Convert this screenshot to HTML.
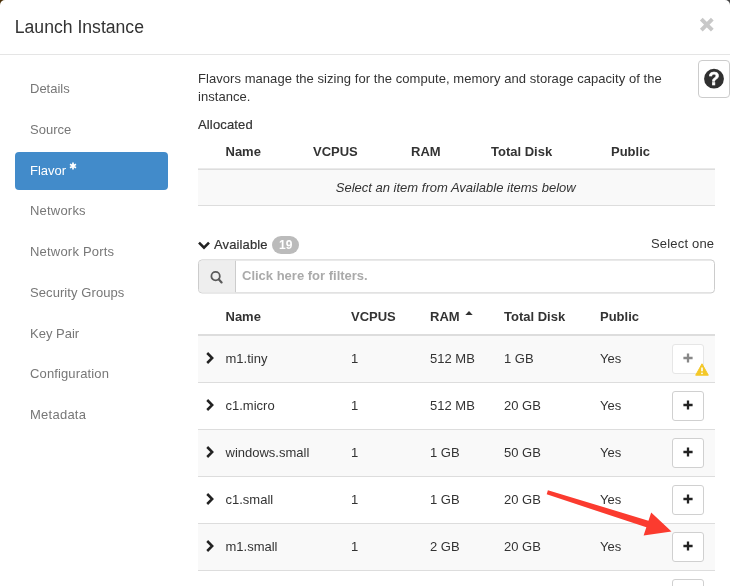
<!DOCTYPE html>
<html><head><meta charset="utf-8">
<style>
*{box-sizing:border-box}
html,body{margin:0;padding:0}
body{width:730px;height:586px;overflow:hidden;background:#fff;font-family:"Liberation Sans",sans-serif;font-size:13px;line-height:18.57px;color:#333;position:relative}
.corner{position:absolute;top:0;width:6px;height:6px}
.corner.l{left:0;background:#4a3008}.corner.r{right:0;background:#444}
.modal{will-change:transform;position:absolute;left:0;top:0;width:730px;height:700px;background:#fff;border-radius:5px}
.hdr{position:absolute;left:0;top:0;width:730px;height:55px;border-bottom:1px solid #e5e5e5}
.title{position:absolute;left:14.8px;top:14px;font-size:17.6px;line-height:26px;color:#333}
.close{position:absolute;left:699px;top:13px;width:16px;height:20px}
.nav div{position:absolute;left:15px;width:153px;height:38px;line-height:38px;padding:0 15px;color:#777;border-radius:4px}
.nav div.act{background:#428bca;color:#fff}
.nav .ast{position:absolute;left:54px;top:10px}
.help{position:absolute;left:698px;top:60px;width:32px;height:38px;border:1px solid #ccc;border-radius:4px;background:#fff}
.abs{position:absolute}
table{border-collapse:collapse;position:absolute;left:198px;width:517px;table-layout:fixed}
th{font-weight:bold;text-align:left;padding:0;vertical-align:middle}
td{padding:0;vertical-align:middle}
.btn{position:absolute;left:672px;width:32px;height:31px;border:1px solid #ccc;border-radius:4px;background:#fff}

.th{font-weight:bold}
.med{-webkit-text-stroke:0.2px #333;letter-spacing:0.15px}
.badge{left:272px;top:236px;height:18px;min-width:10px;padding:3px 7px;font-size:12px;line-height:12px;font-weight:bold;color:#fff;background:#bbb;border-radius:10px}
.filter{transform:translateY(0.45px);left:198px;top:259px;width:517px;height:34px;border:1px solid #ccc;border-radius:4px;background:#fff}
.filter .addon{position:absolute;left:0;top:0;width:37px;height:32px;background:#eee;border-right:1px solid #ccc;border-radius:3px 0 0 3px}
.filter .addon svg{position:absolute;left:11px;top:10px}
.filter .ph{position:absolute;left:43px;top:7px;color:#aaa;font-weight:bold}
.row{left:198px;width:517px;height:47px;border-bottom:1px solid #ddd}
.row span{position:absolute;top:14px}
.row .chev{position:absolute;left:6.7px;top:14.8px}
.row .btn{position:absolute;left:474px;top:8px;width:32px;height:30px;border:1px solid #d0d0d0;border-radius:3px;background:#fff}
.row .btn.dis{border-color:#e6e6e6}
.row .btn svg{position:absolute;left:9px;top:7.4px}
.row .warn{position:absolute;left:497px;top:27px}
</style></head><body>
<div class="corner l"></div><div class="corner r"></div>
<div class="modal">
<div class="hdr"><div class="title">Launch Instance</div>
<svg class="close" viewBox="0 0 16 20"><path d="M2.3 6.1 L13.3 17.2 M13.3 6.1 L2.3 17.2" stroke="#c8c8c8" stroke-width="3.9" fill="none"/></svg>
</div>
<div class="nav">
<div style="top:70px"><span>Details</span></div><div style="top:111px"><span>Source</span></div><div class="act" style="top:151.8px">Flavor<svg class="ast" width="8" height="8" viewBox="0 0 8 8"><path d="M4 0.5 V7.5 M1 2.25 L7 5.75 M7 2.25 L1 5.75" stroke="#fff" stroke-width="1.7"/></svg></div><div style="top:192px"><span style="letter-spacing:0.2px">Networks</span></div><div style="top:233px"><span style="letter-spacing:0.2px">Network Ports</span></div><div style="top:274px"><span style="letter-spacing:0.08px">Security Groups</span></div><div style="top:315px"><span>Key Pair</span></div><div style="top:355px"><span style="letter-spacing:0.13px">Configuration</span></div><div style="top:396px"><span style="letter-spacing:0.25px">Metadata</span></div>
</div>
<div class="abs" style="left:198px;top:70.3px;width:500px;letter-spacing:0.055px;line-height:18px">Flavors manage the sizing for the compute, memory and storage capacity of the instance.</div>
<div class="help"><svg width="22" height="22" viewBox="0 0 22 22" style="position:absolute;left:4px;top:7px"><circle cx="11" cy="10.7" r="9.9" fill="#303030"/><text x="11.1" y="17.2" text-anchor="middle" font-family="Liberation Sans, sans-serif" font-weight="bold" font-size="18" fill="#fff" stroke="#fff" stroke-width="0.5">?</text></svg></div>
<div class="abs med" style="left:198px;top:116px">Allocated</div>
<div class="abs th" style="left:225.5px;top:143px">Name</div>
<div class="abs th" style="left:313px;top:143px">VCPUS</div>
<div class="abs th" style="left:411px;top:143px">RAM</div>
<div class="abs th" style="left:491px;top:143px">Total Disk</div>
<div class="abs th" style="left:611px;top:143px">Public</div>
<div class="abs" style="left:198px;top:168px;width:517px;height:2px;background:#ddd;transform:translateY(0.4px)"></div>
<div class="abs" style="left:198px;top:170px;width:517px;height:36px;background:#f9f9f9;border-bottom:1px solid #ddd;text-align:center;line-height:35px;font-style:italic;padding-right:1.5px">Select an item from Available items below</div>
<svg class="abs" style="left:197px;top:240px" width="14" height="11" viewBox="0 0 14 11"><path d="M2 2.6 L7 7.6 L12 2.6" stroke="#222" stroke-width="2.6" fill="none"/></svg>
<div class="abs" style="left:214px;top:236px;letter-spacing:0.12px;-webkit-text-stroke:0.2px #333">Available</div>
<div class="abs badge">19</div>
<div class="abs" style="left:651px;top:235px;letter-spacing:0.18px">Select one</div>
<div class="abs filter"><div class="addon"><svg width="14" height="14" viewBox="0 0 14 14"><circle cx="5.6" cy="5.7" r="4.2" stroke="#5a5a5a" stroke-width="1.8" fill="none"/><path d="M8.7 8.8 L11.6 12" stroke="#5a5a5a" stroke-width="2.2" stroke-linecap="round"/></svg></div><div class="ph">Click here for filters.</div></div>
<div class="abs th" style="left:225.5px;top:308px">Name</div>
<div class="abs th" style="left:351px;top:308px">VCPUS</div>
<div class="abs th" style="left:430px;top:308px">RAM</div>
<svg class="abs" style="left:465px;top:310.3px" width="8" height="6" viewBox="0 0 8 6"><path d="M0.3 5 L4 1 L7.7 5 Z" fill="#333"/></svg>
<div class="abs th" style="left:504px;top:308px">Total Disk</div>
<div class="abs th" style="left:600px;top:308px">Public</div>
<div class="abs" style="left:198px;top:334px;width:517px;height:2px;background:#ddd"></div>
<div class="abs row" style="top:336px;background:#f9f9f9"><svg class="chev" width="10" height="14" viewBox="0 0 10 14"><path d="M2.2 2 L7.2 7 L2.2 12" stroke="#222" stroke-width="2.5" fill="none"/></svg><span style="left:27.5px">m1.tiny</span><span style="left:153px">1</span><span style="left:232px">512 MB</span><span style="left:306px">1 GB</span><span style="left:402px">Yes</span><div class="btn dis"><svg width="12" height="12" viewBox="0 0 12 12"><path d="M6 1.4 V10.6 M1.4 6 H10.6" stroke="#888" stroke-width="2.3"/></svg></div><svg class="warn" width="14" height="13" viewBox="0 0 14 13"><path d="M7 0.8 L13.3 12.2 H0.7 Z" fill="#f4c828" stroke="#f4c828" stroke-width="1" stroke-linejoin="round"/><path d="M7 4.5 V8.3" stroke="#fff" stroke-width="1.6"/><circle cx="7" cy="10.3" r="0.9" fill="#fff"/></svg></div>
<div class="abs row" style="top:383px;background:#fff"><svg class="chev" width="10" height="14" viewBox="0 0 10 14"><path d="M2.2 2 L7.2 7 L2.2 12" stroke="#222" stroke-width="2.5" fill="none"/></svg><span style="left:27.5px">c1.micro</span><span style="left:153px">1</span><span style="left:232px">512 MB</span><span style="left:306px">20 GB</span><span style="left:402px">Yes</span><div class="btn"><svg width="12" height="12" viewBox="0 0 12 12"><path d="M6 1.4 V10.6 M1.4 6 H10.6" stroke="#222" stroke-width="2.3"/></svg></div></div>
<div class="abs row" style="top:430px;background:#f9f9f9"><svg class="chev" width="10" height="14" viewBox="0 0 10 14"><path d="M2.2 2 L7.2 7 L2.2 12" stroke="#222" stroke-width="2.5" fill="none"/></svg><span style="left:27.5px">windows.small</span><span style="left:153px">1</span><span style="left:232px">1 GB</span><span style="left:306px">50 GB</span><span style="left:402px">Yes</span><div class="btn"><svg width="12" height="12" viewBox="0 0 12 12"><path d="M6 1.4 V10.6 M1.4 6 H10.6" stroke="#222" stroke-width="2.3"/></svg></div></div>
<div class="abs row" style="top:477px;background:#fff"><svg class="chev" width="10" height="14" viewBox="0 0 10 14"><path d="M2.2 2 L7.2 7 L2.2 12" stroke="#222" stroke-width="2.5" fill="none"/></svg><span style="left:27.5px">c1.small</span><span style="left:153px">1</span><span style="left:232px">1 GB</span><span style="left:306px">20 GB</span><span style="left:402px">Yes</span><div class="btn"><svg width="12" height="12" viewBox="0 0 12 12"><path d="M6 1.4 V10.6 M1.4 6 H10.6" stroke="#222" stroke-width="2.3"/></svg></div></div>
<div class="abs row" style="top:524px;background:#f9f9f9"><svg class="chev" width="10" height="14" viewBox="0 0 10 14"><path d="M2.2 2 L7.2 7 L2.2 12" stroke="#222" stroke-width="2.5" fill="none"/></svg><span style="left:27.5px">m1.small</span><span style="left:153px">1</span><span style="left:232px">2 GB</span><span style="left:306px">20 GB</span><span style="left:402px">Yes</span><div class="btn"><svg width="12" height="12" viewBox="0 0 12 12"><path d="M6 1.4 V10.6 M1.4 6 H10.6" stroke="#222" stroke-width="2.3"/></svg></div></div>
<div class="abs row" style="top:571px;background:#fff"><svg class="chev" width="10" height="14" viewBox="0 0 10 14"><path d="M2.2 2 L7.2 7 L2.2 12" stroke="#222" stroke-width="2.5" fill="none"/></svg><span style="left:27.5px">m1.medium</span><span style="left:153px">2</span><span style="left:232px">4 GB</span><span style="left:306px">40 GB</span><span style="left:402px">Yes</span><div class="btn"><svg width="12" height="12" viewBox="0 0 12 12"><path d="M6 1.4 V10.6 M1.4 6 H10.6" stroke="#222" stroke-width="2.3"/></svg></div></div>
<svg class="abs" style="left:0;top:0;pointer-events:none" width="730" height="586" viewBox="0 0 730 586"><polygon points="546.7,494.3 547.9,490.3 648.45,520.66 651.2,512.6 671.5,531.4 643.6,535.6 646.35,527.34" fill="#fb3b2f"/></svg>
</div>
</body></html>
